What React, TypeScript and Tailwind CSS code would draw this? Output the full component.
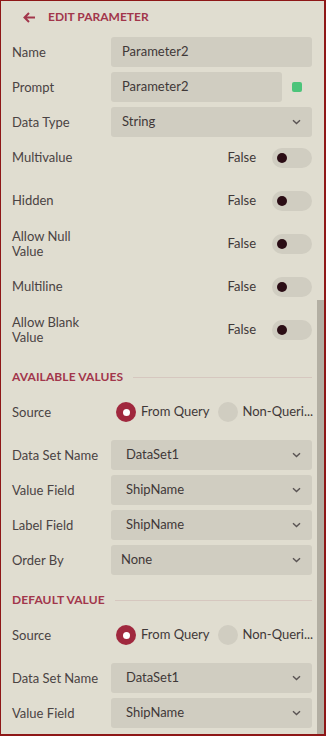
import React from "react";

const maroon = "text-[#a2364b]";

function Chevron() {
  return (
    <svg width="9" height="6" viewBox="0 0 9 6" fill="none">
      <path d="M1 1.2l3.5 3.4L8 1.2" stroke="#5a5454" strokeWidth="1.4" />
    </svg>
  );
}

function Label({ children }: { children: React.ReactNode }) {
  return (
    <div className="w-[99px] shrink-0 text-[13px] leading-[15px] text-[#4a4343]">
      {children}
    </div>
  );
}

function TextRow({
  label,
  value,
  pad = "pl-[11px]",
}: {
  label: string;
  value: string;
  pad?: string;
}) {
  return (
    <div className="flex items-center h-[30px]">
      <Label>{label}</Label>
      <div
        className={`flex-1 h-[30px] flex items-center rounded-[3px] bg-[#d0cdc1] ${pad} text-[13px] text-[#3f3838]`}
      >
        {value}
      </div>
    </div>
  );
}

function SelectRow({
  label,
  value,
  pad = "pl-[11px]",
}: {
  label: string;
  value: string;
  pad?: string;
}) {
  return (
    <div className="flex items-center h-[30px]">
      <Label>{label}</Label>
      <div
        className={`flex-1 h-[30px] flex items-center justify-between rounded-[3px] bg-[#d0cdc1] ${pad} pr-[11px] text-[13px] text-[#3f3838]`}
      >
        <span>{value}</span>
        <Chevron />
      </div>
    </div>
  );
}

function ToggleRow({ label }: { label: React.ReactNode }) {
  return (
    <div className="flex items-center h-[43px]">
      <div className="w-[90px] text-[13px] leading-[15px] text-[#4a4343]">
        {label}
      </div>
      <div className="flex-1" />
      <span className="text-[13px] text-[#3f3838]">False</span>
      <div className="ml-[16px] w-[40px] h-[20px] rounded-full bg-[#d0cdc1] flex items-center pl-[5px]">
        <div className="w-[10px] h-[10px] rounded-full bg-[#2b0d15]" />
      </div>
    </div>
  );
}

function SectionHeader({ title, mt }: { title: string; mt: string }) {
  return (
    <div className={`flex items-center h-[20px] gap-[10px] ${mt}`}>
      <span className={`text-[12px] font-bold tracking-[0.1px] ${maroon}`}>
        {title}
      </span>
      <div className="flex-1 h-px bg-[#d6c7bf]" />
    </div>
  );
}

function SourceRow() {
  return (
    <div className="flex items-center h-[30px] mt-[10px]">
      <Label>Source</Label>
      <div className="flex items-center pl-[5px] text-[13px] text-[#3f3838] whitespace-nowrap">
        <div className="shrink-0 w-[20px] h-[20px] rounded-full bg-[#a0283e] flex items-center justify-center">
          <div className="w-[7px] h-[7px] rounded-full bg-white" />
        </div>
        <span className="shrink-0 ml-[5px]">From Query</span>
        <div className="shrink-0 ml-[8px] w-[20px] h-[20px] rounded-full bg-[#d0cdc1]" />
        <span className="shrink-0 ml-[5px]">Non-Queri...</span>
      </div>
    </div>
  );
}

export default function App() {
  return (
    <div
      className="w-[326px] h-[736px] flex border-t border-l border-r-2 border-b-2 border-[#8e1717] bg-[#e0ddd0] overflow-hidden"
      style={{ fontFamily: "Lato, 'Open Sans', sans-serif" }}
    >
      <div className="w-[316px] pl-[11px] pr-[5px] flex flex-col">
        <div className="h-[32px] flex items-center">
          <div className="w-[11px]" />
          <svg width="12" height="11" viewBox="0 0 12 11" fill="none">
            <path
              d="M12 5.5H2M6 1L1.5 5.5 6 10"
              stroke="#a2364b"
              strokeWidth="2"
            />
          </svg>
          <span className={`ml-[13px] text-[12px] font-bold ${maroon}`}>
            EDIT PARAMETER
          </span>
        </div>

        <div className="mt-[4px] flex flex-col gap-[5px]">
          <TextRow label="Name" value="Parameter2" />
          <div className="flex items-center h-[30px]">
            <Label>Prompt</Label>
            <div className="w-[171px] h-[30px] flex items-center rounded-[3px] bg-[#d0cdc1] pl-[11px] text-[13px] text-[#3f3838]">
              Parameter2
            </div>
            <div className="ml-[10px] w-[10px] h-[10px] rounded-[2px] bg-[#4cc47a]" />
          </div>
          <SelectRow label="Data Type" value="String" />
        </div>

        <div className="-mt-[1px] flex flex-col">
          <ToggleRow label="Multivalue" />
          <ToggleRow label="Hidden" />
          <ToggleRow label="Allow Null Value" />
          <ToggleRow label="Multiline" />
          <ToggleRow label="Allow Blank Value" />
        </div>

        <SectionHeader title="AVAILABLE VALUES" mt="mt-[16px]" />
        <SourceRow />
        <div className="mt-[13px] flex flex-col gap-[5px]">
          <SelectRow label="Data Set Name" value="DataSet1" pad="pl-[15px]" />
          <SelectRow label="Value Field" value="ShipName" pad="pl-[15px]" />
          <SelectRow label="Label Field" value="ShipName" pad="pl-[15px]" />
          <SelectRow label="Order By" value="None" pad="pl-[10px]" />
        </div>

        <SectionHeader title="DEFAULT VALUE" mt="mt-[15px]" />
        <SourceRow />
        <div className="mt-[13px] flex flex-col gap-[5px]">
          <SelectRow label="Data Set Name" value="DataSet1" pad="pl-[15px]" />
          <SelectRow label="Value Field" value="ShipName" pad="pl-[15px]" />
        </div>
      </div>

      <div className="w-[7px] flex flex-col pt-[299px]">
        <div className="flex-1 bg-[#b3afa3]" />
      </div>
    </div>
  );
}
